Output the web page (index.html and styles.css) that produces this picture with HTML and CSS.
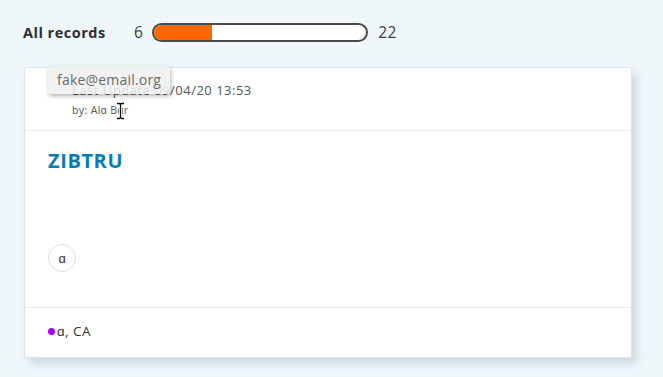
FILE: index.html
```html
<!DOCTYPE html>
<html>
<head>
<meta charset="utf-8">
<link rel="stylesheet" href="styles.css">
</head>
<body>
  <div class="summary">
    <span class="label">All records</span>
    <span class="count">6</span>
    <div class="bar"><div class="bar-fill" style="width: 27.3%"></div></div>
    <span class="count">22</span>
  </div>
  <div class="card">
    <div class="card-head">
      <div class="updated">Last Update 09/04/20 13:53</div>
      <div class="by">by: Alɑ Bɑr</div>
      <div class="tooltip">fake@email.org</div>
      <svg class="cursor" width="9" height="18" viewBox="0 0 9 18">
        <path d="M1 1.5h2.5l1 1 1-1H8M4.5 2.5v13M1 16.5h2.5l1-1 1 1H8" fill="none" stroke="#fff" stroke-width="3"/>
        <path d="M1 1.5h2.5l1 1 1-1H8M4.5 2.5v13M1 16.5h2.5l1-1 1 1H8" fill="none" stroke="#111" stroke-width="1.3"/>
      </svg>
    </div>
    <div class="card-body">
      <div class="title">ZIBTRU</div>
      <div class="chip">ɑ</div>
    </div>
    <div class="card-foot">
      <span class="dot"></span><span class="foot-text">ɑ, CA</span>
    </div>
  </div>
</body>
</html>
```
FILE: styles.css
```css
html, body {
  margin: 0;
  padding: 0;
}
body {
  background: #eff7fb;
  font-family: "Open Sans", sans-serif;
  color: #333;
  width: 663px;
  height: 377px;
  overflow: hidden;
}
.summary {
  display: flex;
  align-items: center;
  padding: 22px 0 0 23px;
  height: 20px;
}
.label {
  font-weight: 700;
  font-size: 14.5px;
  letter-spacing: 0.5px;
  color: #2c2f36;
  width: 111px;
  white-space: nowrap;
}
.count {
  font-size: 15.5px;
  letter-spacing: 0.4px;
  color: #3a3f48;
}
.bar {
  width: 212px;
  height: 15px;
  border: 2px solid #4a4a4a;
  border-radius: 10px;
  background: #fff;
  margin: 0 10px 0 9px;
  overflow: hidden;
}
.bar-fill {
  height: 100%;
  background: #ff6600;
}
.card {
  margin: 25px 0 0 24px;
  width: 606px;
  background: #fff;
  border: 1px solid #e0e3e5;
  border-radius: 2px;
  box-shadow: 5px 6px 8px rgba(140, 160, 175, 0.35);
}
.card-head {
  position: relative;
  height: 63px;
  border-bottom: 1px solid #ececec;
  padding: 13px 0 0 47px;
  box-sizing: border-box;
}
.updated {
  font-size: 13px;
  letter-spacing: 0.5px;
  color: #555;
  line-height: 18px;
}
.by {
  font-size: 10.5px;
  letter-spacing: 0.4px;
  color: #555;
  margin-top: 4px;
  line-height: 14px;
}
.tooltip {
  position: absolute;
  left: 23px;
  top: -2px;
  padding: 4px 9px 5px 9px;
  font-size: 14px;
  letter-spacing: 0.2px;
  color: #6a6a6a;
  background: rgba(240, 240, 240, 0.86);
  border-radius: 3px;
  box-shadow: 1px 2px 4px rgba(0, 0, 0, 0.3);
  line-height: 19px;
}
.cursor {
  position: absolute;
  left: 91px;
  top: 34px;
}
.card-body {
  height: 177px;
  border-bottom: 1px solid #ececec;
  padding: 17px 0 0 23px;
  box-sizing: border-box;
}
.title {
  font-weight: 700;
  font-size: 20px;
  letter-spacing: 0.6px;
  color: #0a7cb5;
  line-height: 26px;
}
.chip {
  margin-top: 70px;
  width: 26px;
  height: 26px;
  border: 1px solid #e0e0e0;
  border-radius: 50%;
  display: flex;
  align-items: center;
  justify-content: center;
  font-size: 13px;
  color: #333;
}
.card-foot {
  height: 49px;
  display: flex;
  align-items: center;
  padding: 0 0 3px 23px;
  box-sizing: border-box;
}
.dot {
  width: 7px;
  height: 7px;
  border-radius: 50%;
  background: #aa00ee;
  margin-right: 2px;
}
.foot-text {
  font-size: 13.5px;
  letter-spacing: 0.5px;
  color: #333;
}
```
